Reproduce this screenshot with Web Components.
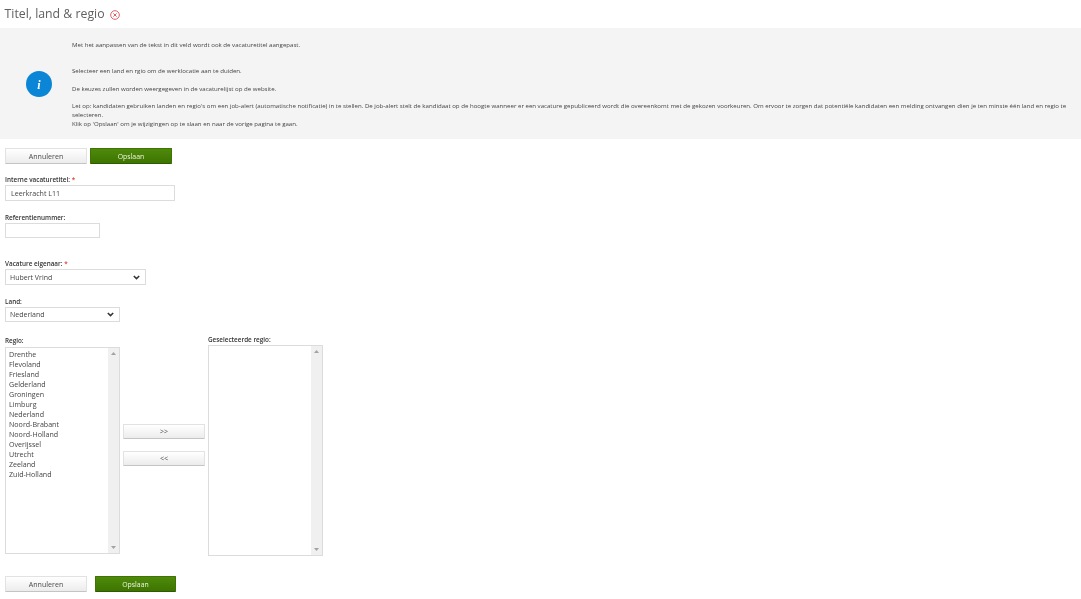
<!DOCTYPE html>
<html lang="nl"><head><meta charset="utf-8"><title>Titel, land &amp; regio</title>
<style>
html,body{margin:0;padding:0;background:#fff}
body{font-family:"Open Sans","Liberation Sans",sans-serif;color:#444;width:1081px;height:599px;overflow:hidden}
x-page{filter:blur(.3px)}
</style></head><body>
<template id="t-title"><style>
:host{display:flex;align-items:center;gap:5.5px;height:28px;padding-left:4.5px;box-sizing:border-box}
span{font-size:12.3px;color:#606060;line-height:28px}
svg{display:block;margin-top:2px}
</style><span><slot></slot></span><svg width="10" height="10" viewBox="0 0 10 10" fill="none" stroke="#d9606a"><circle cx="5" cy="5" r="4.3" stroke-width="1"/><path d="M3.4 3.4l3.2 3.2M6.6 3.4L3.4 6.6" stroke-width="1"/></svg></template>

<template id="t-banner"><style>
:host{display:flex;height:111px;background:#f4f4f4;box-sizing:border-box}
.ico{width:72px;flex:none;display:flex;align-items:center;padding-left:26px;box-sizing:border-box}
.ico svg{display:block}
.txt{flex:1;padding:11.8px 6px 0 0;font-size:6.1px;line-height:9px;color:#444}
</style><div class="ico"><svg width="26" height="26" viewBox="0 0 26 26"><circle cx="13" cy="13" r="13" fill="#0b85d6"/><text x="13" y="17.5" text-anchor="middle" font-family="Liberation Serif,serif" font-style="italic" font-weight="700" font-size="12" fill="#fff">i</text></svg></div><div class="txt"><slot></slot></div></template>

<template id="t-btn"><style>
:host{display:inline-flex;align-items:center;justify-content:center;width:82px;height:16px;box-sizing:border-box;font-size:7.1px;border-radius:1px;color:#4a4a4a;background:linear-gradient(#fff,#ececec);border:1px solid #e2e2e2;border-bottom:1px solid #c4c4c4}
:host([primary]){color:#eef6e2;background:linear-gradient(#4f8a0b,#3d7500);border:1px solid #3f7404;border-bottom-color:#2f5a02;font-size:6.9px}
:host([small]){height:15px}
</style><slot></slot></template>

<template id="t-field"><style>
:host{display:block}
label{display:block;font-size:6.35px;font-weight:600;color:#333;line-height:9px;margin-bottom:var(--gap,1px)}
b{color:#e0433a;font-weight:600}
</style><label><slot name="label"></slot><b id="r"></b></label><slot></slot></template>

<template id="t-input"><style>
:host{display:flex;align-items:center;box-sizing:border-box;height:var(--h,16px);padding-left:5px;background:#fff;border:1px solid #dcdcdc;font-size:7.1px;color:#444}
</style><slot></slot></template>

<template id="t-select"><style>
:host{display:flex;align-items:center;justify-content:space-between;box-sizing:border-box;height:var(--h,16px);padding:0 5px 0 4px;background:#fff;border:1px solid #dcdcdc;font-size:7px;color:#444}
svg{display:block}
</style><span><slot></slot></span><svg width="7" height="5" viewBox="0 0 7 5" fill="none" stroke="#333" stroke-width="1.5"><path d="M.8 1l2.7 2.6L6.2 1"/></svg></template>

<template id="t-list"><style>
:host{display:flex;box-sizing:border-box;background:#fff;border:1px solid #dcdcdc;font-size:7.1px;color:#444}
.items{flex:1;padding:1px 0 0 3px;line-height:10.03px}
.bar{width:11px;flex:none;background:#f0f0f0;display:flex;flex-direction:column;justify-content:space-between;align-items:center;padding:4px 0}
svg{display:block}
</style><div class="items"><slot></slot></div><div class="bar"><svg width="5" height="3" viewBox="0 0 5 3"><path d="M2.5 0L5 3H0z" fill="#a3a3a3"/></svg><svg width="5" height="3" viewBox="0 0 5 3"><path d="M2.5 3L5 0H0z" fill="#a3a3a3"/></svg></div></template>

<template id="t-page"><style>
:host{display:block}
.row{display:flex;padding-left:5px}
.top{gap:3px;margin-top:9px}
.col{display:flex;flex-direction:column;padding-left:5px}
.f1{margin-top:11px;width:170px}
.f2{margin-top:12px;width:95px;--h:15px}
.f3{margin-top:21px;width:141px}
.f4{margin-top:12px;width:115px;--h:15px}
.dual{display:flex;padding-left:5px;align-items:flex-start}
.a{width:115px;margin-top:14px;--gap:2px}
.mid{width:88px;flex:none;display:flex;flex-direction:column;align-items:center;gap:12px;padding-top:101.5px;box-sizing:border-box}
.b{width:115px;margin-top:13px}
.a x-list{height:207px}.b x-list{height:211px}
.bottom{gap:8px;margin-top:20px}
.bottom x-btn[primary]{width:81px}
</style>
<x-title>Titel, land &amp; regio</x-title>
<x-banner>
<div>Met het aanpassen van de tekst in dit veld wordt ook de vacaturetitel aangepast.</div>
<div style="margin-top:17.7px">Selecteer een land en rgio om de werklocatie aan te duiden.</div>
<div style="margin-top:8.3px">De keuzes zullen worden weergegeven in de vacaturelijst op de website.</div>
<div style="margin-top:8.7px">Let op: kandidaten gebruiken landen en regio's om een job-alert (automatische notificatie) in te stellen. De job-alert stelt de kandidaat op de hoogte wanneer er een vacature gepubliceerd wordt die overeenkomt met de gekozen voorkeuren. Om ervoor te zorgen dat potentiële kandidaten een melding ontvangen dien je ten minste één land en regio te selecteren.</div>
<div>Klik op 'Opslaan' om je wijzigingen op te slaan en naar de vorige pagina te gaan.</div>
</x-banner>
<div class="row top"><x-btn>Annuleren</x-btn><x-btn primary>Opslaan</x-btn></div>
<div class="col">
<x-field class="f1" required><span slot="label">Interne vacaturetitel:</span><x-input>Leerkracht L11</x-input></x-field>
<x-field class="f2"><span slot="label">Referentienummer:</span><x-input></x-input></x-field>
<x-field class="f3" required><span slot="label">Vacature eigenaar:</span><x-select>Hubert Vrind</x-select></x-field>
<x-field class="f4"><span slot="label">Land:</span><x-select>Nederland</x-select></x-field>
</div>
<div class="dual">
<x-field class="a"><span slot="label">Regio:</span><x-list><div>Drenthe</div><div>Flevoland</div><div>Friesland</div><div>Gelderland</div><div>Groningen</div><div>Limburg</div><div>Nederland</div><div>Noord-Brabant</div><div>Noord-Holland</div><div>Overijssel</div><div>Utrecht</div><div>Zeeland</div><div>Zuid-Holland</div></x-list></x-field>
<div class="mid"><x-btn small>&gt;&gt;</x-btn><x-btn small>&lt;&lt;</x-btn></div>
<x-field class="b"><span slot="label">Geselecteerde regio:</span><x-list></x-list></x-field>
</div>
<div class="row bottom"><x-btn>Annuleren</x-btn><x-btn primary>Opslaan</x-btn></div>
</template>

<script>
function def(tag,tid,init){customElements.define(tag,class extends HTMLElement{constructor(){super();const s=this.attachShadow({mode:"open"});s.appendChild(document.getElementById(tid).content.cloneNode(true));if(init)init(this,s)}})}
def("x-title","t-title");def("x-banner","t-banner");def("x-btn","t-btn");
def("x-field","t-field",(h,s)=>{if(h.hasAttribute("required"))s.getElementById("r").textContent=" *"});
def("x-input","t-input");def("x-select","t-select");def("x-list","t-list");
def("x-page","t-page");
</script>
<x-page></x-page>
</body></html>
